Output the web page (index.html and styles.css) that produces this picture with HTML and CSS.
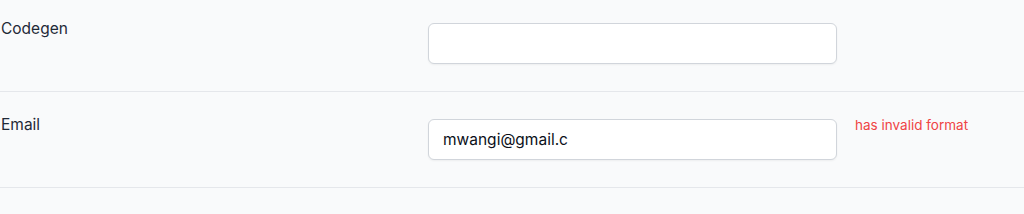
FILE: index.html
```html
<!DOCTYPE html>
<html lang="en">
<head>
  <meta charset="UTF-8">
  <title>Form</title>
  <link rel="stylesheet" href="styles.css">
</head>
<body>
<div class="form">
  <div class="field-row first">
    <label class="field-label" for="codegen">Codegen</label>
    <input class="field-input" id="codegen" type="text" value="">
    <span class="field-error"></span>
  </div>
  <div class="field-row">
    <label class="field-label" for="email">Email</label>
    <input class="field-input" id="email" type="text" value="mwangi@gmail.c">
    <span class="field-error">has invalid format</span>
  </div>
</div>
</body>
</html>
```
FILE: styles.css
```css
body {
  margin: 0;
  background: #f9fafb;
  font-family: Inter, "Noto Sans", sans-serif;
  color: #1f2937;
}

.form {
  margin-top: -4px;
}

.field-row {
  display: grid;
  grid-template-columns: 427px 409px 1fr;
  align-items: start;
  padding: 23px 0 27px 1px;
  border-bottom: 1px solid #e5e7eb;
}

.field-label {
  font-size: 15.5px;
  line-height: 20px;
}

.field-input {
  box-sizing: border-box;
  margin-top: 4px;
  width: 409px;
  height: 41px;
  padding: 0 14px;
  border: 1px solid #d1d5db;
  border-radius: 6px;
  background: #fff;
  box-shadow: 0 1px 2px rgba(0,0,0,0.05);
  font-family: Inter, sans-serif;
  font-size: 15.5px;
  color: #0b0f19;
}

.field-error {
  margin-left: 18px;
  font-size: 13.5px;
  line-height: 20px;
  color: #ef4444;
}
```
